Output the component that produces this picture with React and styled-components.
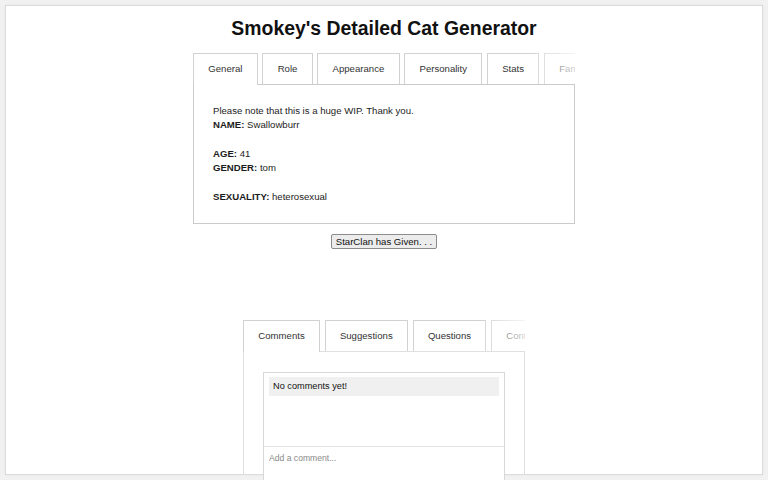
import React from 'react';
import styled, { createGlobalStyle } from 'styled-components';

const GlobalStyle = createGlobalStyle`
    html, body {
        margin: 0;
        padding: 0;
        background: #f1f1f1;
    }
    body {
        padding: 5px;
        font-family: "Liberation Sans", Arial, sans-serif;
        color: #222;
    }
`

const generalTabs = ['General', 'Role', 'Appearance', 'Personality', 'Stats', 'Family'];
const commentTabs = ['Comments', 'Suggestions', 'Questions', 'Contact'];

function Tabs({ tabs, active }) {
    return (
        <TabRow>
            {tabs.map((t) => (
                <Tab key={t} $active={t === active}>{t}</Tab>
            ))}
        </TabRow>
    )
}

function App() {
    return (
        <>
            <GlobalStyle />
            <Card>
                <Title>Smokey's Detailed Cat Generator</Title>

                <TabSection $width={382}>
                    <Tabs tabs={generalTabs} active="General" />
                    <InfoPanel>
                        Please note that this is a huge WIP. Thank you.<br />
                        <b>NAME:</b> Swallowburr<br />
                        <br />
                        <b>AGE:</b> 41<br />
                        <b>GENDER:</b> tom<br />
                        <br />
                        <b>SEXUALITY:</b> heterosexual
                    </InfoPanel>
                </TabSection>

                <GenerateButton>StarClan has Given. . .</GenerateButton>

                <CommentSection $width={282}>
                    <Tabs tabs={commentTabs} active="Comments" />
                    <CommentPanel>
                        <CommentBox>
                            <Messages>
                                <EmptyRow>No comments yet!</EmptyRow>
                            </Messages>
                            <CommentInput placeholder="Add a comment..." />
                        </CommentBox>
                    </CommentPanel>
                </CommentSection>
            </Card>
        </>
    )
}

const Card = styled.div`
    box-sizing: border-box;
    height: 470px;
    background: #fff;
    border: 1px solid #dcdcdc;
    box-shadow: 0 0 2px rgba(0, 0, 0, 0.06);
    padding-top: 11px;
    display: flex;
    flex-direction: column;
    align-items: center;
`

const Title = styled.h1`
    margin: 0 0 14px;
    font-size: 19.4px;
    line-height: 22px;
    font-weight: 700;
    color: #111;
`

const TabSection = styled.div`
    width: ${(p) => p.$width}px;
    display: flex;
    flex-direction: column;
`

const CommentSection = styled(TabSection)`
    margin-top: 71px;
    flex: 1;
    min-height: 0;
`

const TabRow = styled.div`
    position: relative;
    z-index: 1;
    display: flex;
    align-items: flex-start;
    gap: 4.6px;
    height: 32px;
    margin-bottom: -1px;
    overflow: hidden;

    &::after {
        content: '';
        position: absolute;
        top: 0;
        right: 0;
        width: 40px;
        height: 31px;
        background: linear-gradient(to right, rgba(255, 255, 255, 0.15), rgba(255, 255, 255, 0.78));
    }
`

const Tab = styled.div`
    box-sizing: border-box;
    flex-shrink: 0;
    height: ${(p) => (p.$active ? 32 : 31)}px;
    padding: 0 14.3px;
    border: 1px solid #d2d2d2;
    border-bottom: none;
    background: #fff;
    font-size: 9.6px;
    line-height: 30px;
    color: #333;
`

const InfoPanel = styled.div`
    border: 1px solid #cbcbcb;
    padding: 18.5px 19px;
    font-size: 9.6px;
    line-height: 14.4px;
    color: #1c1c1c;

    b {
        font-weight: 700;
    }
`

const GenerateButton = styled.button`
    margin-top: 10px;
    height: 15px;
    padding: 0 3.5px;
    border: 1px solid #8c8c8c;
    border-radius: 2px;
    background: #ececec;
    font-family: "Liberation Sans", Arial, sans-serif;
    font-size: 9.6px;
    line-height: 13px;
    color: #111;
`

const CommentPanel = styled.div`
    flex: 1;
    min-height: 0;
    border: 1px solid #e0e0e0;
    border-bottom: none;
    padding: 20px 19px 0;
`

const CommentBox = styled.div`
    background: #fff;
    border: 1px solid #d8d8d8;
    height: 120px;
    display: flex;
    flex-direction: column;
`

const Messages = styled.div`
    height: 74px;
    flex-shrink: 0;
    padding: 4px 5px 0;
    box-sizing: border-box;
    border-bottom: 1px solid #e4e4e4;
`

const EmptyRow = styled.div`
    height: 19px;
    line-height: 19px;
    padding-left: 4px;
    background: #f0f0f0;
    font-size: 9.2px;
    color: #111;
`

const CommentInput = styled.input`
    border: none;
    outline: none;
    margin: 0;
    padding: 5px 5px 4px;
    height: 12px;
    font-family: "Liberation Sans", Arial, sans-serif;
    font-size: 8.6px;
    color: #333;

    &::placeholder {
        color: #8a8a8a;
    }
`

export default App;
